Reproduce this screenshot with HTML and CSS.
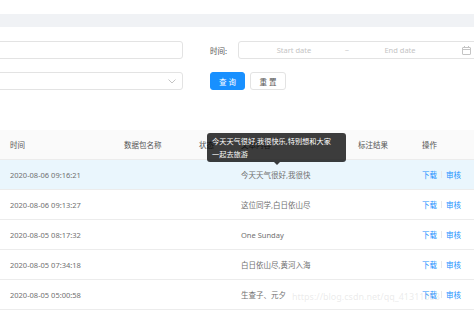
FILE: index.html
```html
<!DOCTYPE html>
<html lang="zh">
<head>
<meta charset="utf-8">
<link rel="stylesheet" href="styles.css">
</head>
<body>
<div class="page">
  <div class="topbar"></div>
  <div class="form">
    <div class="form-row">
      <div class="input"></div>
      <span class="label">时间:</span>
      <div class="range">
        <span class="ph start">Start date</span>
        <span class="sep">~</span>
        <span class="ph end">End date</span>
        <svg class="cal" width="9" height="9" viewBox="0 0 9 9"><rect x="0.5" y="1.5" width="8" height="7" rx="0.5" fill="none" stroke="#c4c4c4"/><line x1="0.5" y1="3.5" x2="8.5" y2="3.5" stroke="#c4c4c4"/><line x1="2.5" y1="0" x2="2.5" y2="2" stroke="#c4c4c4"/><line x1="6.5" y1="0" x2="6.5" y2="2" stroke="#c4c4c4"/></svg>
      </div>
    </div>
    <div class="form-row">
      <div class="input select">
        <svg class="chev" width="8" height="5" viewBox="0 0 8 5"><path d="M0.5 0.5 L4 4 L7.5 0.5" fill="none" stroke="#c4c4c4" stroke-width="1"/></svg>
      </div>
      <button class="btn primary">查 询</button>
      <button class="btn">重 置</button>
    </div>
  </div>

  <div class="table">
    <div class="tr head">
      <div class="td">时间</div>
      <div class="td">数据包名称</div>
      <div class="td">状态</div>
      <div class="td">文本内容</div>
      <div class="td">标注结果</div>
      <div class="td">操作</div>
    </div>
    <div class="tr hover">
      <div class="td">2020-08-06 09:16:21</div>
      <div class="td"></div>
      <div class="td"></div>
      <div class="td">今天天气很好,我很快</div>
      <div class="td"></div>
      <div class="td"><a class="link">下载</a><i class="divider"></i><a class="link">审核</a></div>
    </div>
    <div class="tr">
      <div class="td">2020-08-06 09:13:27</div>
      <div class="td"></div>
      <div class="td"></div>
      <div class="td">这位同学,白日依山尽</div>
      <div class="td"></div>
      <div class="td"><a class="link">下载</a><i class="divider"></i><a class="link">审核</a></div>
    </div>
    <div class="tr">
      <div class="td">2020-08-05 08:17:32</div>
      <div class="td"></div>
      <div class="td"></div>
      <div class="td">One Sunday</div>
      <div class="td"></div>
      <div class="td"><a class="link">下载</a><i class="divider"></i><a class="link">审核</a></div>
    </div>
    <div class="tr">
      <div class="td">2020-08-05 07:34:18</div>
      <div class="td"></div>
      <div class="td"></div>
      <div class="td">白日依山尽,黄河入海</div>
      <div class="td"></div>
      <div class="td"><a class="link">下载</a><i class="divider"></i><a class="link">审核</a></div>
    </div>
    <div class="tr">
      <div class="td">2020-08-05 05:00:58</div>
      <div class="td"></div>
      <div class="td"></div>
      <div class="td">生查子、元夕</div>
      <div class="td"></div>
      <div class="td"><a class="link">下载</a><i class="divider"></i><a class="link">审核</a></div>
    </div>
  </div>

  <div class="tooltip">今天天气很好,我很快乐,特别想和大家<br>一起去旅游</div>
  <div class="watermark">https://blog.csdn.net/qq_41311053</div>
</div>
</body>
</html>
```
FILE: styles.css
```css
html, body {
  margin: 0;
  padding: 0;
  background: #fff;
  overflow: hidden;
}
body {
  width: 474px;
  height: 311px;
  font-family: "Noto Sans", "Noto Sans CJK SC", sans-serif;
  font-size: 7.5px;
  color: #707070;
}
.page {
  position: relative;
  width: 474px;
  height: 311px;
  overflow: hidden;
}
.topbar {
  margin-top: 14px;
  height: 13px;
  background: #f0f2f5;
}
.form {
  padding-top: 14px;
  display: flex;
  flex-direction: column;
  gap: 13px;
}
.form-row {
  display: flex;
  align-items: center;
  height: 18px;
  margin-left: -17px;
}
.form-row > * {
  flex-shrink: 0;
}
.input {
  box-sizing: border-box;
  width: 200px;
  height: 18px;
  border: 1px solid #e3e3e3;
  border-radius: 3px;
  margin-right: 27px;
  display: flex;
  align-items: center;
  justify-content: flex-end;
}
.select .chev {
  margin-right: 6px;
}
.label {
  width: 28px;
  color: #555;
}
.range {
  box-sizing: border-box;
  width: 240px;
  height: 18px;
  border: 1px solid #e3e3e3;
  border-radius: 3px;
  display: flex;
  align-items: center;
  color: #c4c4c4;
}
.range > * { flex-shrink: 0; }
.ph {
  width: 100px;
  text-align: center;
}
.start { margin-left: 5px; }
.sep { width: 6px; text-align: center; }
.end { margin-left: 0; }
.cal { margin-left: 12px; }
.btn {
  box-sizing: border-box;
  height: 18px;
  width: 36px;
  padding: 0;
  border: 1px solid #e3e3e3;
  border-radius: 3px;
  background: #fff;
  color: #555;
  font-family: inherit;
  font-size: 7.5px;
  margin-right: 5px;
}
.btn.primary {
  width: 35px;
  background: #1890ff;
  border-color: #1890ff;
  color: #fff;
}
.table {
  margin-top: 40px;
}
.tr {
  display: grid;
  grid-template-columns: 114px 75px 42px 117px 64px 1fr;
  height: 30px;
  box-sizing: border-box;
  border-bottom: 1px solid #ececec;
  align-items: center;
}
.tr.head {
  background: #fafafa;
  color: #555;
}
.tr.hover {
  background: #eaf6fd;
}
.td {
  padding-left: 10px;
  white-space: nowrap;
  display: flex;
  align-items: center;
}
.link {
  color: #1890ff;
}
.divider {
  display: inline-block;
  width: 1px;
  height: 7px;
  background: #e8e8e8;
  margin: 0 4px 0 4px;
}
.tooltip {
  position: absolute;
  left: 207px;
  top: 133px;
  width: 139px;
  height: 29px;
  box-sizing: border-box;
  padding: 2px 5px;
  background: rgba(0, 0, 0, 0.76);
  color: #fff;
  border-radius: 3px;
  line-height: 13px;
  font-size: 7.2px;
  white-space: nowrap;
}
.tooltip::after {
  content: "";
  position: absolute;
  left: 67px;
  bottom: -3px;
  border-left: 3px solid transparent;
  border-right: 3px solid transparent;
  border-top: 3px solid rgba(0, 0, 0, 0.76);
}
.watermark {
  position: absolute;
  left: 292px;
  top: 290px;
  font-size: 9px;
  color: rgba(190, 190, 190, 0.3);
  white-space: nowrap;
}
```
